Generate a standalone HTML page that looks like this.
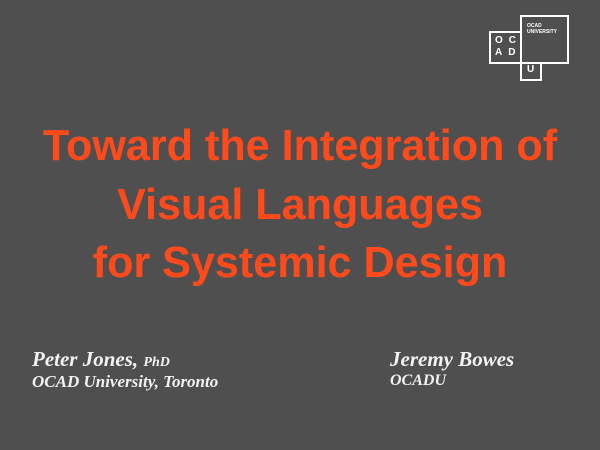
<!DOCTYPE html>
<html><head><style>
body{margin:0;width:600px;height:450px;background:#4f4f4f;position:relative;overflow:hidden}
.t{position:absolute;left:0;width:600px;text-align:center;color:#ff4a1c;font-family:"Liberation Sans",sans-serif;font-weight:bold;font-size:44px;line-height:1;transform:scaleX(0.98);transform-origin:300px 0}
.a{position:absolute;color:#f2f2f2;font-family:"Liberation Serif",serif;font-weight:bold;font-style:italic;white-space:nowrap}
.b{position:absolute;border:2px solid #fff;box-sizing:border-box}
.l{position:absolute;color:#fff;font-family:"Liberation Sans",sans-serif;font-weight:bold}
</style></head><body>
<div class="b" style="left:520px;top:15px;width:49px;height:49px"></div>
<div class="b" style="left:489px;top:31px;width:33px;height:33px;background:#4f4f4f"></div>
<div class="b" style="left:520px;top:62px;width:22px;height:19px"></div>
<div class="l" style="left:527px;top:23px;font-size:5px;line-height:6px">OCAD<br>UNIVERSITY</div>
<div class="l" style="left:495px;top:35px;font-size:10px;line-height:12px;letter-spacing:6px">OC<br>AD</div>
<div class="l" style="left:527px;top:64px;font-size:10px">U</div>
<div class="t" style="top:124px">Toward the Integration of</div>
<div class="t" style="top:183px">Visual Languages</div>
<div class="t" style="top:241px">for Systemic Design</div>
<div class="a" style="left:32px;top:347px;font-size:21px">Peter Jones, <span style="font-size:14px">PhD</span></div>
<div class="a" style="left:32px;top:372px;font-size:17px">OCAD University, Toronto</div>
<div class="a" style="left:390px;top:347px;font-size:21px">Jeremy Bowes</div>
<div class="a" style="left:390px;top:372px;font-size:16px">OCADU</div>
</body></html>
